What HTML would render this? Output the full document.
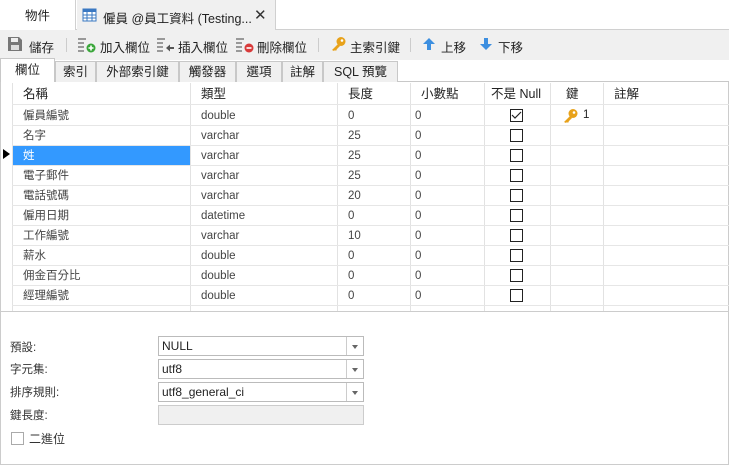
<!DOCTYPE html><html><head><meta charset="utf-8"><style>
*{margin:0;padding:0;box-sizing:border-box}
body{width:729px;height:465px;overflow:hidden;background:#fff;font-family:"Liberation Sans","Noto Sans CJK TC",sans-serif;font-size:12px;color:#222;position:relative}
.a{position:absolute;white-space:nowrap}
.tb{position:absolute;top:30px;left:0;width:729px;height:30px;background:#f0f0f0}
.st{position:absolute;top:61px;height:21px;border:1px solid #c8c8c8;border-bottom:none;background:#f0f0f0;font-size:12.5px;text-align:center;line-height:21px}
.cell{position:absolute;height:20px;line-height:22px;font-size:11.5px;color:#444;padding-left:10px}
.hl{position:absolute;height:1px;left:12px;width:717px;background:#e6e6e6}
.vl{position:absolute;width:1px;top:83px;height:229px;background:#e2e2e2}
.cb{position:absolute;width:13px;height:13px;border:1px solid #222;background:#fff}
.combo{position:absolute;left:158px;width:206px;height:20px;border:1px solid #bbb;background:#fff;font-size:12px;line-height:18px;padding-left:3px}
.combo .dd{position:absolute;right:0;top:0;width:17px;height:18px;border-left:1px solid #ccc}
.combo .dd:after{content:"";position:absolute;left:5px;top:8px;border:3.5px solid transparent;border-top:4px solid #666}
.lbl{position:absolute;left:10px;font-size:11.5px;color:#333}
</style></head><body>
<div class="a" style="left:0;top:0;width:729px;height:30px;background:#fff;border-bottom:1px solid #d0d0d0"></div>
<div class="a" style="left:0;top:0;width:76px;height:30px;background:#fff;border-right:1px solid #d0d0d0;text-align:center;line-height:32px;font-size:12.5px">物件</div>
<div class="a" style="left:77px;top:0;width:199px;height:31px;background:#f0f0f0;border-right:1px solid #d0d0d0"></div>
<svg class="a" style="left:82px;top:8px" width="16" height="16"><rect x="1" y="1" width="13" height="12" fill="#fff" stroke="#3a78c2"/><rect x="1" y="1" width="13" height="3" fill="#3a78c2"/><path d="M5 4v9M10 4v9M1 7h13M1 10h13" stroke="#3a78c2"/></svg>
<div class="a" style="left:103px;top:8px;font-size:12.5px">僱員 @員工資料 (Testing...</div>
<div class="a" style="left:254px;top:6px;font-size:15px;color:#333">✕</div>
<div class="tb"></div>
<svg class="a" style="left:8px;top:37px" width="14" height="14"><path d="M0 0h11l3 3v11H0z" fill="#777"/><rect x="3" y="1" width="7" height="4" fill="#eee"/><rect x="3" y="8" width="8" height="5" fill="#ddd"/></svg>
<div class="a" style="left:29px;top:37px;font-size:12.5px">儲存</div>
<div class="a" style="left:66px;top:38px;width:1px;height:14px;background:#ccc"></div>
<svg class="a" style="left:78px;top:37px" width="18" height="16"><path d="M0 2h8M0 6h6M0 10h6M0 14h6" stroke="#999" stroke-width="2"/><circle cx="13" cy="11" r="4.5" fill="#3aa63a"/><path d="M10.5 11h5M13 8.5v5" stroke="#fff" stroke-width="1.6"/></svg>
<div class="a" style="left:100px;top:37px;font-size:12.5px">加入欄位</div>
<svg class="a" style="left:157px;top:37px" width="18" height="16"><path d="M0 2h8M0 6h6M0 10h6M0 14h6" stroke="#999" stroke-width="2"/><path d="M9 11l4-3.5v7zM12 10h5v2h-5z" fill="#555"/></svg>
<div class="a" style="left:178px;top:37px;font-size:12.5px">插入欄位</div>
<svg class="a" style="left:236px;top:37px" width="18" height="16"><path d="M0 2h8M0 6h6M0 10h6M0 14h6" stroke="#999" stroke-width="2"/><circle cx="13" cy="11" r="4.5" fill="#d83a3a"/><path d="M10.5 11h5" stroke="#fff" stroke-width="1.6"/></svg>
<div class="a" style="left:257px;top:37px;font-size:12.5px">刪除欄位</div>
<div class="a" style="left:318px;top:38px;width:1px;height:14px;background:#ccc"></div>
<svg class="a" style="left:331px;top:36px" width="16" height="16"><circle cx="10" cy="5.5" r="4.5" fill="#e8a21a"/><circle cx="11" cy="4.5" r="1.3" fill="#fff"/><path d="M7 8l-6 6 2 1 1-1 1 1 1-2 3-3z" fill="#e8a21a"/></svg>
<div class="a" style="left:350px;top:37px;font-size:12.5px">主索引鍵</div>
<div class="a" style="left:410px;top:38px;width:1px;height:14px;background:#ccc"></div>
<svg class="a" style="left:422px;top:37px" width="14" height="14"><path d="M7 1l6 6h-4v6H5V7H1z" fill="#3d8fe0"/></svg>
<div class="a" style="left:441px;top:37px;font-size:12.5px">上移</div>
<svg class="a" style="left:479px;top:37px" width="14" height="14"><path d="M7 13l6-6h-4V1H5v6H1z" fill="#3d8fe0"/></svg>
<div class="a" style="left:498px;top:37px;font-size:12.5px">下移</div>
<div class="a" style="left:0;top:81px;width:729px;height:1px;background:#c8c8c8"></div>
<div class="st" style="left:0;top:58px;height:24px;width:55px;background:#fff;z-index:2;line-height:22px">欄位</div>
<div class="st" style="left:55px;width:41px">索引</div>
<div class="st" style="left:96px;width:83px">外部索引鍵</div>
<div class="st" style="left:179px;width:57px">觸發器</div>
<div class="st" style="left:236px;width:46px">選項</div>
<div class="st" style="left:282px;width:41px">註解</div>
<div class="st" style="left:323px;width:75px">SQL 預覽</div>
<div class="a" style="left:0;top:82px;width:729px;height:230px;background:#fff"></div>
<div class="a" style="left:0;top:82px;width:1px;height:383px;background:#ccc"></div>
<div class="a" style="left:728px;top:82px;width:1px;height:383px;background:#ccc"></div>
<div class="a" style="left:0;top:464px;width:729px;height:1px;background:#ccc"></div>
<div class="vl" style="left:12px"></div><div class="vl" style="left:190px"></div><div class="vl" style="left:337px"></div><div class="vl" style="left:410px"></div><div class="vl" style="left:484px"></div><div class="vl" style="left:550px"></div><div class="vl" style="left:603px"></div>
<div class="hl" style="top:104px"></div><div class="hl" style="top:125px"></div><div class="hl" style="top:145px"></div><div class="hl" style="top:165px"></div><div class="hl" style="top:185px"></div><div class="hl" style="top:205px"></div><div class="hl" style="top:225px"></div><div class="hl" style="top:245px"></div><div class="hl" style="top:265px"></div><div class="hl" style="top:285px"></div><div class="hl" style="top:305px"></div>
<div class="cell" style="left:13px;top:83px;font-size:12.5px;color:#222">名稱</div>
<div class="cell" style="left:191px;top:83px;font-size:12.5px;color:#222">類型</div>
<div class="cell" style="left:338px;top:83px;font-size:12.5px;color:#222">長度</div>
<div class="cell" style="left:411px;top:83px;font-size:12.5px;color:#222">小數點</div>
<div class="cell" style="left:481px;top:83px;font-size:12.5px;color:#222">不是 Null</div>
<div class="cell" style="left:556px;top:83px;font-size:12.5px;color:#222">鍵</div>
<div class="cell" style="left:604px;top:83px;font-size:12.5px;color:#222">註解</div>
<div class="a" style="left:13px;top:146px;width:177px;height:19px;background:#3399ff"></div>
<div class="a" style="left:3px;top:149px;border:5px solid transparent;border-left:7px solid #000;border-right:0"></div>
<div class="cell" style="left:13px;top:105px">僱員編號</div><div class="cell" style="left:191px;top:105px">double</div><div class="cell" style="left:338px;top:105px">0</div><div class="cell" style="left:405px;top:105px">0</div>
<div class="cell" style="left:13px;top:125px">名字</div><div class="cell" style="left:191px;top:125px">varchar</div><div class="cell" style="left:338px;top:125px">25</div><div class="cell" style="left:405px;top:125px">0</div>
<div class="cell" style="left:13px;top:145px;color:#fff">姓</div><div class="cell" style="left:191px;top:145px">varchar</div><div class="cell" style="left:338px;top:145px">25</div><div class="cell" style="left:405px;top:145px">0</div>
<div class="cell" style="left:13px;top:165px">電子郵件</div><div class="cell" style="left:191px;top:165px">varchar</div><div class="cell" style="left:338px;top:165px">25</div><div class="cell" style="left:405px;top:165px">0</div>
<div class="cell" style="left:13px;top:185px">電話號碼</div><div class="cell" style="left:191px;top:185px">varchar</div><div class="cell" style="left:338px;top:185px">20</div><div class="cell" style="left:405px;top:185px">0</div>
<div class="cell" style="left:13px;top:205px">僱用日期</div><div class="cell" style="left:191px;top:205px">datetime</div><div class="cell" style="left:338px;top:205px">0</div><div class="cell" style="left:405px;top:205px">0</div>
<div class="cell" style="left:13px;top:225px">工作編號</div><div class="cell" style="left:191px;top:225px">varchar</div><div class="cell" style="left:338px;top:225px">10</div><div class="cell" style="left:405px;top:225px">0</div>
<div class="cell" style="left:13px;top:245px">薪水</div><div class="cell" style="left:191px;top:245px">double</div><div class="cell" style="left:338px;top:245px">0</div><div class="cell" style="left:405px;top:245px">0</div>
<div class="cell" style="left:13px;top:265px">佣金百分比</div><div class="cell" style="left:191px;top:265px">double</div><div class="cell" style="left:338px;top:265px">0</div><div class="cell" style="left:405px;top:265px">0</div>
<div class="cell" style="left:13px;top:285px">經理編號</div><div class="cell" style="left:191px;top:285px">double</div><div class="cell" style="left:338px;top:285px">0</div><div class="cell" style="left:405px;top:285px">0</div>
<div class="cb" style="left:510px;top:109px"></div>
<svg class="a" style="left:511px;top:110px" width="11" height="11"><path d="M1 5l3 3 6-6" stroke="#222" fill="none" stroke-width="1.2"/></svg>
<div class="cb" style="left:510px;top:129px"></div><div class="cb" style="left:510px;top:149px"></div><div class="cb" style="left:510px;top:169px"></div><div class="cb" style="left:510px;top:189px"></div><div class="cb" style="left:510px;top:209px"></div><div class="cb" style="left:510px;top:229px"></div><div class="cb" style="left:510px;top:249px"></div><div class="cb" style="left:510px;top:269px"></div><div class="cb" style="left:510px;top:289px"></div>
<svg class="a" style="left:563px;top:108px" width="16" height="16"><circle cx="10" cy="5.5" r="4.5" fill="#e8a21a"/><circle cx="11" cy="4.5" r="1.3" fill="#fff"/><path d="M7 8l-6 6 2 1 1-1 1 1 1-2 3-3z" fill="#e8a21a"/></svg>
<div class="a" style="left:583px;top:109px;font-size:11.5px">1</div>
<div class="a" style="left:0;top:311px;width:729px;height:1px;background:#ccc"></div>
<div class="lbl" style="top:339px">預設:</div>
<div class="lbl" style="top:361px">字元集:</div>
<div class="lbl" style="top:384px">排序規則:</div>
<div class="lbl" style="top:407px">鍵長度:</div>
<div class="combo" style="top:336px">NULL<div class="dd"></div></div>
<div class="combo" style="top:359px">utf8<div class="dd"></div></div>
<div class="combo" style="top:382px">utf8_general_ci<div class="dd"></div></div>
<div class="combo" style="top:405px;background:#f0f0f0;border-color:#ccc"></div>
<div class="a" style="left:11px;top:432px;width:13px;height:13px;border:1px solid #aaa"></div>
<div class="lbl" style="left:29px;top:430px;font-size:12px">二進位</div>
</body></html>
